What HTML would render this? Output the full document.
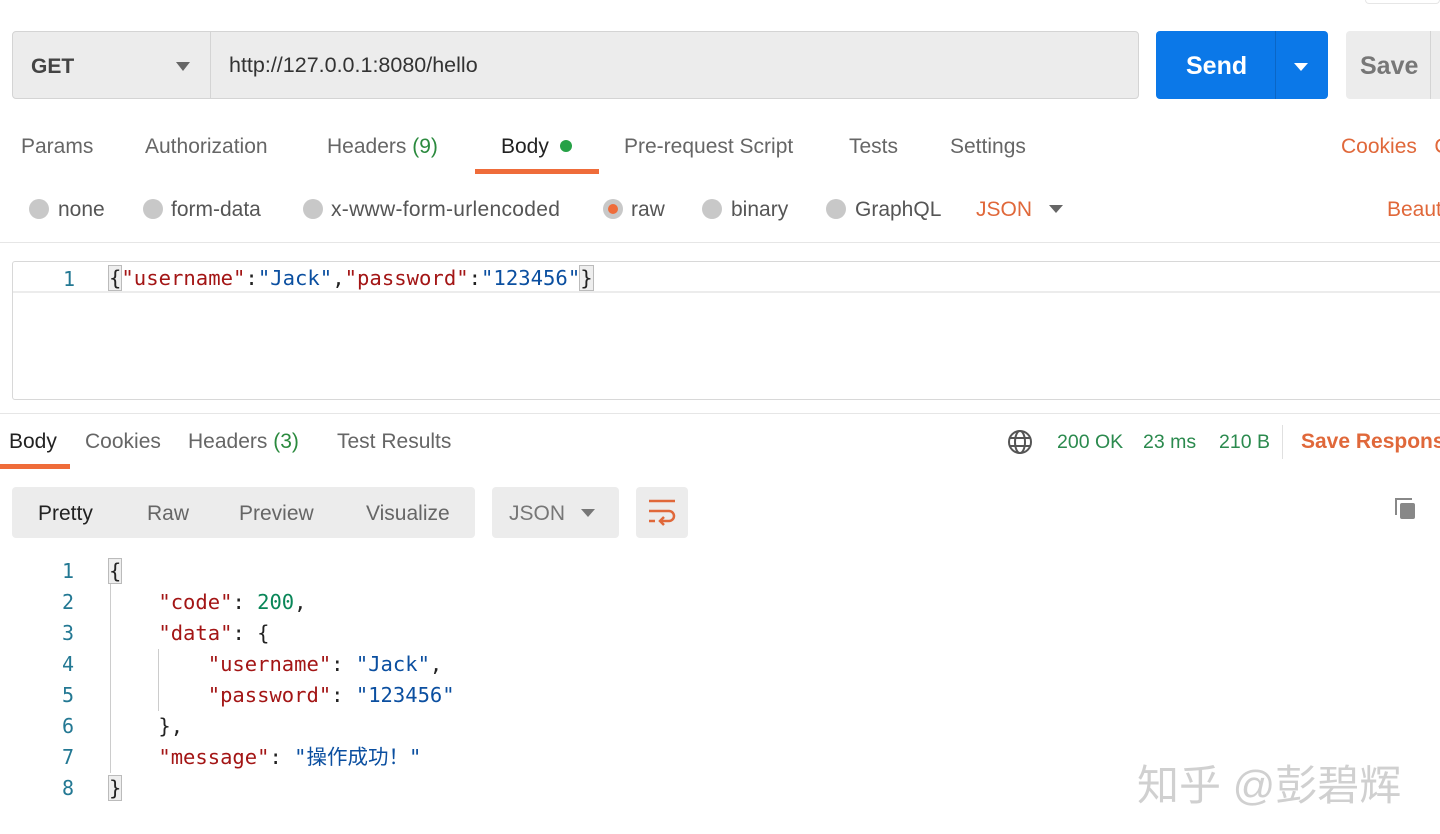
<!DOCTYPE html>
<html><head><meta charset="utf-8"><style>
*{margin:0;padding:0;box-sizing:border-box}
body{width:1440px;height:834px;overflow:hidden;background:#fff;font-family:"Liberation Sans",sans-serif;position:relative;color:#505050}
.a{position:absolute;white-space:nowrap}
.mono{font-family:"DejaVu Sans Mono","Liberation Mono","Noto Sans CJK SC",monospace;font-size:20.5px}
.k{color:#a31515}.s{color:#0b4fa0}.n{color:#098658}.p{color:#222}
.ln{color:#237893;font-family:"DejaVu Sans Mono",monospace;font-size:20px;position:absolute;width:40px;text-align:right}
.tab{font-size:21px;color:#666;top:135px}
.rad{position:absolute;top:199px;width:20px;height:20px;border-radius:50%;background:#c8c8c8}
.opt{font-size:21px;color:#555;top:198px}
</style></head><body>
<div class="a" style="left:1365px;top:0;width:75px;height:4px;border:1px solid #e6e6e6;border-top:none;border-radius:0 0 4px 4px"></div>
<div class="a" style="left:12px;top:31px;width:1127px;height:68px;background:#ececec;border:1px solid #d4d4d4;border-radius:4px"></div>
<div class="a" style="left:210px;top:32px;width:1px;height:66px;background:#d4d4d4"></div>
<div class="a" style="left:31px;top:55px;font-size:21px;font-weight:bold;color:#444">GET</div>
<div class="a" style="left:176px;top:62px;border-left:7px solid transparent;border-right:7px solid transparent;border-top:9px solid #666"></div>
<div class="a" style="left:229px;top:53px;font-size:21.5px;color:#333">http://127.0.0.1:8080/hello</div>
<div class="a" style="left:1156px;top:31px;width:172px;height:68px;background:#0b78e8;border-radius:4px"></div>
<div class="a" style="left:1275px;top:31px;width:1px;height:68px;background:#0a66c6"></div>
<div class="a" style="left:1186px;top:52px;font-size:25px;font-weight:bold;color:#fff">Send</div>
<div class="a" style="left:1294px;top:63px;border-left:7px solid transparent;border-right:7px solid transparent;border-top:8px solid #fff"></div>
<div class="a" style="left:1346px;top:31px;width:100px;height:68px;background:#ececec;border-radius:4px"></div>
<div class="a" style="left:1430px;top:31px;width:1px;height:68px;background:#d4d4d4"></div>
<div class="a" style="left:1360px;top:52px;font-size:25px;font-weight:bold;color:#777">Save</div>
<div class="a tab" style="left:21px">Params</div>
<div class="a tab" style="left:145px">Authorization</div>
<div class="a tab" style="left:327px">Headers <span style="color:#2b8a3e">(9)</span></div>
<div class="a tab" style="left:501px;color:#222">Body</div>
<div class="a" style="left:560px;top:140px;width:12px;height:12px;border-radius:50%;background:#26a146"></div>
<div class="a" style="left:475px;top:169px;width:124px;height:5px;background:#ef6c3a"></div>
<div class="a tab" style="left:624px">Pre-request Script</div>
<div class="a tab" style="left:849px">Tests</div>
<div class="a tab" style="left:950px">Settings</div>
<div class="a tab" style="left:1341px;color:#e0683a">Cookies&nbsp;&nbsp;&nbsp;C</div>
<div class="rad" style="left:29px"></div><div class="a opt" style="left:58px">none</div>
<div class="rad" style="left:143px"></div><div class="a opt" style="left:171px">form-data</div>
<div class="rad" style="left:303px"></div><div class="a opt" style="left:331px;letter-spacing:0.3px">x-www-form-urlencoded</div>
<div class="rad" style="left:603px"></div><div class="a" style="left:608px;top:204px;width:10px;height:10px;border-radius:50%;background:#ef6c3a"></div><div class="a opt" style="left:631px">raw</div>
<div class="rad" style="left:702px"></div><div class="a opt" style="left:731px">binary</div>
<div class="rad" style="left:826px"></div><div class="a opt" style="left:855px">GraphQL</div>
<div class="a opt" style="left:976px;color:#e0683a">JSON</div>
<div class="a" style="left:1049px;top:205px;border-left:7px solid transparent;border-right:7px solid transparent;border-top:8px solid #666"></div>
<div class="a opt" style="left:1387px;color:#e0683a">Beaut</div>
<div class="a" style="left:0;top:242px;width:1440px;height:1px;background:#e6e6e6"></div>
<div class="a" style="left:12px;top:261px;width:1440px;height:139px;border:1px solid #d8d8d8;border-radius:3px"></div>
<div class="a" style="left:13px;top:262px;width:1440px;height:31px;border-bottom:2px solid #ececec"></div>
<div class="ln" style="left:35px;top:267px">1</div>
<div class="a mono" style="left:109px;top:266px;font-size:20.6px"><span class="p" style="background:#eee;outline:1px solid #bbb">{</span><span class="k">"username"</span><span class="p">:</span><span class="s">"Jack"</span><span class="p">,</span><span class="k">"password"</span><span class="p">:</span><span class="s">"123456"</span><span class="p" style="background:#eee;outline:1px solid #bbb">}</span></div>
<div class="a" style="left:0;top:413px;width:1440px;height:1px;background:#e6e6e6"></div>
<div class="a" style="left:9px;top:430px;font-size:21px;color:#222">Body</div>
<div class="a" style="left:0;top:464px;width:70px;height:5px;background:#ef6c3a"></div>
<div class="a" style="left:85px;top:430px;font-size:21px;color:#666">Cookies</div>
<div class="a" style="left:188px;top:430px;font-size:21px;color:#666">Headers <span style="color:#2b8a3e">(3)</span></div>
<div class="a" style="left:337px;top:430px;font-size:21px;color:#666">Test Results</div>
<svg class="a" style="left:1007px;top:429px" width="26" height="26" viewBox="0 0 26 26" fill="none" stroke="#555" stroke-width="2"><circle cx="13" cy="13" r="11"/><ellipse cx="13" cy="13" rx="5" ry="11"/><path d="M2 9h22M2 17h22"/></svg>
<div class="a" style="left:1057px;top:431px;font-size:19.5px;color:#2b8a4e">200 OK</div>
<div class="a" style="left:1143px;top:431px;font-size:19.5px;color:#2b8a4e">23 ms</div>
<div class="a" style="left:1219px;top:431px;font-size:19.5px;color:#2b8a4e">210 B</div>
<div class="a" style="left:1282px;top:425px;width:1px;height:34px;background:#e0e0e0"></div>
<div class="a" style="left:1301px;top:430px;font-size:21px;font-weight:bold;color:#e0683a">Save Response</div>
<div class="a" style="left:12px;top:487px;width:463px;height:51px;background:#ececec;border-radius:4px"></div>
<div class="a" style="left:38px;top:502px;font-size:21px;color:#222">Pretty</div>
<div class="a" style="left:147px;top:502px;font-size:21px;color:#666">Raw</div>
<div class="a" style="left:239px;top:502px;font-size:21px;color:#666">Preview</div>
<div class="a" style="left:366px;top:502px;font-size:21px;color:#666">Visualize</div>
<div class="a" style="left:492px;top:487px;width:127px;height:51px;background:#ececec;border-radius:4px"></div>
<div class="a" style="left:509px;top:502px;font-size:21px;color:#777">JSON</div>
<div class="a" style="left:581px;top:509px;border-left:7px solid transparent;border-right:7px solid transparent;border-top:8px solid #777"></div>
<div class="a" style="left:636px;top:487px;width:52px;height:51px;background:#ececec;border-radius:4px"></div>
<svg class="a" style="left:646px;top:497px" width="32" height="30" viewBox="0 0 32 30" fill="none" stroke="#e0683a" stroke-width="2.5"><path d="M3 4h26M3 14h20a5 5 0 0 1 0 10h-8M3 24h6"/><path d="M18 20l-4 4 4 4"/></svg>
<svg class="a" style="left:1394px;top:496px" width="26" height="26" viewBox="0 0 26 26"><path d="M2 19V3h16" fill="none" stroke="#888" stroke-width="2"/><rect x="6" y="7" width="15" height="16" rx="2" fill="#888"/></svg>
<div class="ln" style="left:34px;top:559px">1</div>
<div class="ln" style="left:34px;top:590px">2</div>
<div class="ln" style="left:34px;top:621px">3</div>
<div class="ln" style="left:34px;top:652px">4</div>
<div class="ln" style="left:34px;top:683px">5</div>
<div class="ln" style="left:34px;top:714px">6</div>
<div class="ln" style="left:34px;top:745px">7</div>
<div class="ln" style="left:34px;top:776px">8</div>
<div class="a" style="left:110px;top:583px;width:1px;height:190px;background:#ccc"></div>
<div class="a" style="left:158px;top:649px;width:1px;height:62px;background:#ccc"></div>
<div class="a mono" style="left:109px;top:556px;line-height:31px;white-space:pre"><span class="p" style="background:#eee;outline:1px solid #bbb">{</span>
    <span class="k">"code"</span><span class="p">: </span><span class="n">200</span><span class="p">,</span>
    <span class="k">"data"</span><span class="p">: {</span>
        <span class="k">"username"</span><span class="p">: </span><span class="s">"Jack"</span><span class="p">,</span>
        <span class="k">"password"</span><span class="p">: </span><span class="s">"123456"</span>
    <span class="p">},</span>
    <span class="k">"message"</span><span class="p">: </span><span class="s">"操作成功！"</span>
<span class="p" style="background:#eee;outline:1px solid #bbb">}</span></div>
<div class="a" style="left:1137px;top:752px;font-size:42px;color:rgba(120,120,120,0.35);font-family:'Liberation Sans','Noto Sans CJK SC',sans-serif">知乎 @彭碧辉</div>
</body></html>
